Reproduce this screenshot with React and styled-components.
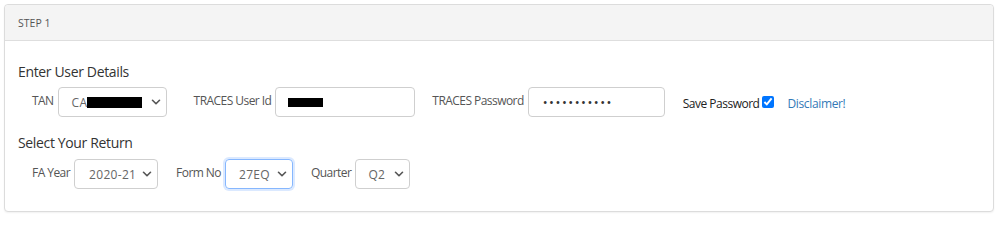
import styled, { createGlobalStyle } from "styled-components";
import { ChevronDown } from "lucide-react";

const GlobalStyle = createGlobalStyle`
  body {
    margin: 0;
    background: #fff;
    font-family: "Open Sans", "Noto Sans", sans-serif;
  }
  * { box-sizing: border-box; }
`;

const Page = styled.div`
  padding: 4px 6px 4px 4px;
`;

const Card = styled.div`
  border: 1px solid #dcdcdc;
  border-radius: 4px;
  background: #fff;
  box-shadow: 0 1px 2px rgba(0, 0, 0, 0.06);
`;

const CardHeader = styled.div`
  height: 36px;
  display: flex;
  align-items: center;
  padding: 0 13px;
  background: #f4f4f4;
  border-bottom: 1px solid #dedede;
  border-radius: 4px 4px 0 0;
  font-size: 10.5px;
  color: #555;
`;

const CardBody = styled.div`
  padding: 21px 13px 22px;
`;

const SectionTitle = styled.div`
  font-size: 14px;
  line-height: 20px;
  letter-spacing: -0.35px;
  color: #333;
  margin-bottom: ${(p) => p.$mb || 5}px;
`;

const Row = styled.div`
  display: flex;
  align-items: center;
  padding-left: 14px;
  margin-bottom: ${(p) => p.$mb || 0}px;
`;

const Field = styled.div`
  display: flex;
  align-items: center;
  margin-right: ${(p) => p.$gap || 18}px;
`;

const Label = styled.span`
  font-size: 12px;
  letter-spacing: -0.55px;
  color: #555;
  margin-right: 4px;
  margin-top: -3px;
  white-space: nowrap;
`;

const SelectBox = styled.div`
  position: relative;
  width: ${(p) => p.$w}px;
  height: 30px;
  border: 1px solid ${(p) => (p.$focused ? "#86b7fe" : "#cfcfcf")};
  border-radius: 4px;
  box-shadow: ${(p) =>
    p.$focused ? "0 0 0 2px rgba(13, 110, 253, 0.15)" : "none"};
  display: flex;
  align-items: center;
  padding-left: ${(p) => p.$pl || 14}px;
  font-size: 12px;
  color: #666;
  letter-spacing: 0.3px;
`;

const Chevron = styled(ChevronDown)`
  position: absolute;
  right: 3px;
  top: 50%;
  margin-top: -7px;
  color: #555;
`;

const TextBox = styled.div`
  width: ${(p) => p.$w}px;
  height: 30px;
  border: 1px solid #cfcfcf;
  border-radius: 4px;
  display: flex;
  align-items: center;
  padding-left: 12px;
`;

const Redact = styled.span`
  display: inline-block;
  width: ${(p) => p.$w}px;
  height: ${(p) => p.$h || 9}px;
  background: #000;
  margin-left: ${(p) => p.$ml || 0}px;
`;

const PasswordInput = styled.input`
  width: 137px;
  height: 30px;
  border: 1px solid #cfcfcf;
  border-radius: 4px;
  padding: 0 14px;
  font-family: "Open Sans", sans-serif;
  font-size: 13px;
  letter-spacing: 1.5px;
  color: #333;
  outline: none;
`;

const CheckLabel = styled.label`
  display: flex;
  align-items: center;
  font-size: 12px;
  letter-spacing: -0.5px;
  color: #222;
  margin-top: 3px;
`;

const Check = styled.input`
  width: 12px;
  height: 12px;
  margin: 0 0 0 3px;
  position: relative;
  top: -2px;
`;

const Disclaimer = styled.a`
  font-size: 12px;
  letter-spacing: -0.35px;
  color: #337ab7;
  text-decoration: none;
  margin-left: 13px;
  margin-top: 3px;
`;

const chevron = <Chevron size={14} strokeWidth={2.8} />;

export default function App() {
  return (
    <>
      <GlobalStyle />
      <Page>
        <Card>
          <CardHeader>STEP 1</CardHeader>
          <CardBody>
            <SectionTitle>Enter User Details</SectionTitle>
            <Row $mb={16}>
              <Field $gap={27}>
                <Label>TAN</Label>
                <SelectBox $w={109} $pl={13}>
                  CA
                  <Redact $w={55} $h={11} />
                  {chevron}
                </SelectBox>
              </Field>
              <Field $gap={17}>
                <Label>TRACES User Id</Label>
                <TextBox $w={140}>
                  <Redact $w={35} />
                </TextBox>
              </Field>
              <Field $gap={18}>
                <Label>TRACES Password</Label>
                <PasswordInput type="password" defaultValue="xxxxxxxxxxx" />
              </Field>
              <CheckLabel>
                Save Password
                <Check type="checkbox" defaultChecked />
              </CheckLabel>
              <Disclaimer href="#">Disclaimer!</Disclaimer>
            </Row>
            <SectionTitle $mb={6}>Select Your Return</SectionTitle>
            <Row>
              <Field>
                <Label>FA Year</Label>
                <SelectBox $w={84}>
                  2020-21
                  {chevron}
                </SelectBox>
              </Field>
              <Field>
                <Label>Form No</Label>
                <SelectBox $w={68} $pl={13} $focused>
                  27EQ
                  {chevron}
                </SelectBox>
              </Field>
              <Field>
                <Label>Quarter</Label>
                <SelectBox $w={55} $pl={12}>
                  Q2
                  {chevron}
                </SelectBox>
              </Field>
            </Row>
          </CardBody>
        </Card>
      </Page>
    </>
  );
}
